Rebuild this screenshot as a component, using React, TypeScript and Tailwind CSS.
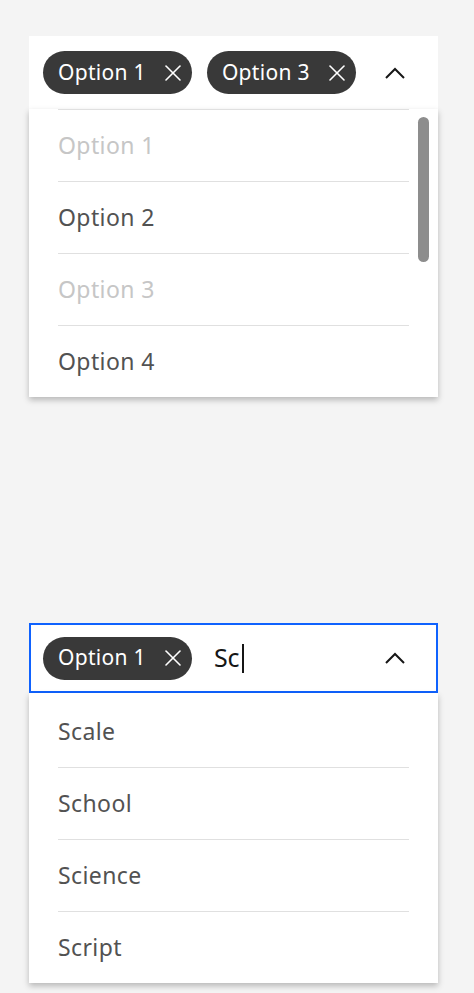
import { X } from "lucide-react";

const font = { fontFamily: '"Noto Sans", "Open Sans", sans-serif' };

function Chevron() {
  return (
    <svg
      width="20"
      height="12"
      viewBox="0 0 20 12"
      fill="none"
      stroke="#161616"
      strokeWidth="2"
      className="ml-auto"
    >
      <path d="M1 11 10 2l9 9" />
    </svg>
  );
}

function Chip({ label }: { label: string }) {
  return (
    <span className="inline-flex h-[43px] items-center gap-[13px] rounded-full bg-[#393939] pl-[15px] pr-[5px] text-[21px] tracking-[0.3px] text-white">
      {label}
      <X size={28} strokeWidth={1.4} />
    </span>
  );
}

function Item({
  label,
  muted,
  line = true,
}: {
  label: string;
  muted?: boolean;
  line?: boolean;
}) {
  return (
    <div className="px-[29px]">
      <div
        className={`flex h-[72px] items-center text-[23px] tracking-[0.4px] ${
          line ? "border-t border-[#e0e0e0]" : ""
        } ${muted ? "text-[#c6c6c6]" : "text-[#525252]"}`}
      >
        {label}
      </div>
    </div>
  );
}

export default function App() {
  return (
    <div className="min-h-[993px] bg-[#f4f4f4] pt-[36px]" style={font}>
      <div className="ml-[29px] w-[409px]">
        <div className="flex h-[73px] items-center gap-[15px] bg-white pl-[14px] pr-[33px]">
          <Chip label="Option 1" />
          <Chip label="Option 3" />
          <Chevron />
        </div>
        <div className="relative bg-white shadow-[0_3px_6px_rgba(0,0,0,0.25)]">
          <Item label="Option 1" muted />
          <Item label="Option 2" />
          <Item label="Option 3" muted />
          <Item label="Option 4" />
          <div className="absolute right-[9px] top-[8px] h-[145px] w-[11px] rounded-full bg-[#8d8d8d]" />
        </div>
      </div>

      <div className="ml-[29px] mt-[226px] w-[409px]">
        <div className="flex h-[70px] items-center border-2 border-[#0f62fe] bg-white pl-[12px] pr-[31px]">
          <Chip label="Option 1" />
          <span className="ml-[22px] flex items-center text-[25px] text-[#161616]">
            Sc
            <span className="ml-[2px] inline-block h-[29px] w-[2px] bg-[#161616]" />
          </span>
          <Chevron />
        </div>
        <div className="bg-white pt-[2px] shadow-[0_3px_6px_rgba(0,0,0,0.25)]">
          <Item label="Scale" line={false} />
          <Item label="School" />
          <Item label="Science" />
          <Item label="Script" />
        </div>
      </div>
    </div>
  );
}
